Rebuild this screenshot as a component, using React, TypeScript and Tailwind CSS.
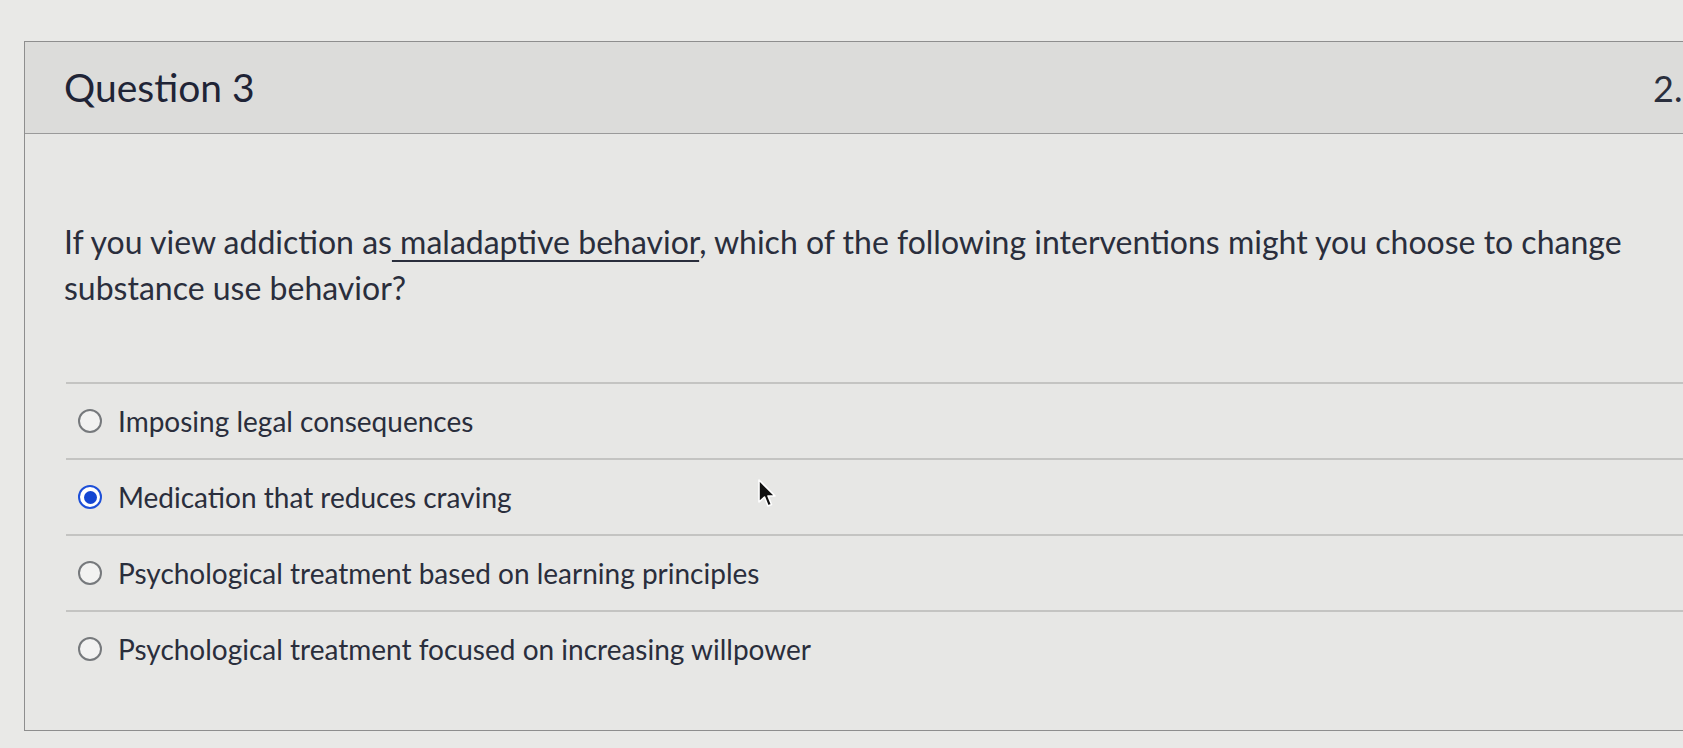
import React from "react";

const options = [
  { label: "Imposing legal consequences", checked: false },
  { label: "Medication that reduces craving", checked: true },
  { label: "Psychological treatment based on learning principles", checked: false },
  { label: "Psychological treatment focused on increasing willpower", checked: false },
];

function Radio({ checked }: { checked: boolean }) {
  if (checked) {
    return (
      <span className="flex h-[24px] w-[24px] shrink-0 items-center justify-center rounded-full border-[2px] border-[#1d4fd8] bg-white">
        <span className="h-[13px] w-[13px] rounded-full bg-[#1446d2]" />
      </span>
    );
  }
  return (
    <span className="h-[24px] w-[24px] shrink-0 rounded-full border-[2px] border-[#76797c] bg-[#f2f2f1]" />
  );
}

export default function App() {
  return (
    <div
      className="relative h-[748px] w-full overflow-hidden bg-[#e9e9e7] pl-[24px] pt-[41px] text-[#2a2e3c]"
      style={{ fontFamily: "Lato, 'Open Sans', sans-serif" }}
    >
      {/* question card */}
      <div className="h-[690px] w-[1720px] border border-[#8e8e8e] bg-[#e7e7e5]">
        <div className="flex h-[92px] items-center border-b border-[#9a9a9a] bg-[#dcdcda] pl-[39px]">
          <h2 className="w-[1589px] shrink-0 text-[39px] font-normal leading-none text-[#1f2436]">Question 3</h2>
          <span className="shrink-0 whitespace-nowrap text-[36px] leading-none text-[#2a2f3d]">2.5 pts</span>
        </div>

        <div className="pl-[39px] pt-[85px]">
          <p className="w-[1590px] text-[32px] leading-[46px]">
            If you view addiction as
            <span className="underline decoration-[1.5px] underline-offset-[6px]"> maladaptive behavior</span>, which of
            the following interventions might you choose to change substance use behavior?
          </p>

          <div className="ml-[2px] mt-[71px]">
            {options.map((o) => (
              <div
                key={o.label}
                className="flex h-[76px] items-center border-t-[2px] border-[#c4c4c2] pl-[12px]"
              >
                <Radio checked={o.checked} />
                <span className="ml-[16px] text-[28px] leading-none">{o.label}</span>
              </div>
            ))}
          </div>
        </div>
      </div>

      {/* mouse pointer */}
      <svg
        className="absolute left-[757px] top-[478px]"
        width="22"
        height="32"
        viewBox="0 0 22 32"
      >
        <path
          d="M2 2 L2 24 L7.5 19 L11 28 L14.5 26.5 L11 18 L18 18 Z"
          fill="#111"
          stroke="#fff"
          strokeWidth="1.6"
          strokeLinejoin="round"
        />
      </svg>
    </div>
  );
}
